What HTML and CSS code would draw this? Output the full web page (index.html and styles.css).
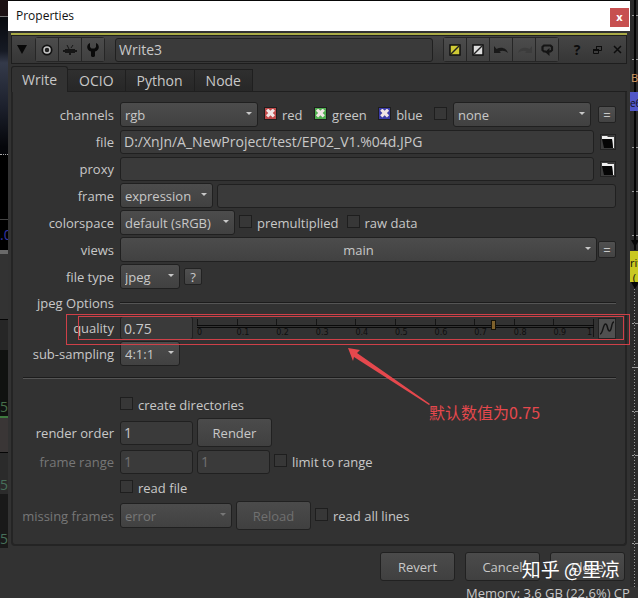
FILE: index.html
```html
<!DOCTYPE html>
<html lang="en">
<head>
    <meta charset="UTF-8">
    <meta name="viewport" content="width=device-width, initial-scale=1.0">
    <title>Properties</title>
    <link rel="stylesheet" href="styles.css">
</head>
<body>
    <div class="desktop">
        <div class="viewer-edge">
            <div class="band band-brown"></div>
            <div class="band band-image"></div>
            <div class="band band-black">.0</div>
            <div class="band band-bar"></div>
            <div class="band band-gray"></div>
            <div class="band band-dark"></div>
            <div class="band band-curve">5</div>
            <div class="band band-panel"></div>
            <div class="band band-low">5</div>
            <div class="band band-last">5</div>
        </div>

        <form class="dialog">
            <header class="titlebar">
                <h1>Properties</h1>
                <button type="button" class="close-btn" aria-label="Close window">x</button>
            </header>

            <div class="node">
                <div class="node-bar">
                    <button type="button" class="bare collapse" aria-label="Collapse">
                        <svg width="10" height="9" viewBox="0 0 10 9"><path d="M0 0h10L5 9z" fill="#080808"/></svg>
                    </button>
                    <div class="tool-group">
                        <button type="button" aria-label="Center node">
                            <svg width="12" height="12" viewBox="0 0 12 12"><circle cx="6" cy="6" r="4.500" fill="#222" stroke="#111" stroke-width="2"/><circle cx="6" cy="6" r="3" fill="none" stroke="#c4c4c4" stroke-width="1.500"/></svg>
                        </button>
                        <button type="button" aria-label="Input controls">
                            <svg width="14" height="12" viewBox="0 0 14 12"><path d="M2 5h10v4H2zM0 6h2v2H0zM12 6h2v2h-2zM6 9h2v2H6z" fill="#161616"/><path d="M4 1l2 4M10 1L8 4" stroke="#161616"/></svg>
                        </button>
                        <button type="button" aria-label="Node settings">
                            <svg width="12" height="14" viewBox="0 0 12 14"><path d="M3 0v4l1.500 1.500h3L9 4V0c2 1 2.800 2.500 2.800 4.200C11.800 6.500 10 8 8 8.500V13L7 14H5l-1-1V8.500C2 8 .2 6.500.2 4.200.2 2.500 1 1 3 0z" fill="#0a0a0a"/></svg>
                        </button>
                    </div>
                    <input type="text" class="node-name" aria-label="Node name" value="Write3">
                    <div class="tool-group">
                        <button type="button" aria-label="Node color">
                            <svg width="12" height="12" viewBox="0 0 12 12"><path d="M1 1h10v10H1z" fill="#d0cb35" stroke="#111" stroke-width="1.500"/><path d="M2 10l8-8" stroke="#222" stroke-width="1.500"/></svg>
                        </button>
                        <button type="button" aria-label="Interface color">
                            <svg width="12" height="12" viewBox="0 0 12 12"><path d="M1 1h10v10H1z" fill="#ddd" stroke="#111" stroke-width="1.500"/><path d="M2 10l8-8" stroke="#222" stroke-width="1.500"/></svg>
                        </button>
                        <button type="button" aria-label="Undo">
                            <svg width="15" height="10" viewBox="0 0 15 10"><path d="M0 1v7h7L5.500 6.500C8 5 11 5.500 14 8 13 3.500 7.500 1 2.500 4z" fill="#191919"/></svg>
                        </button>
                        <button type="button" aria-label="Redo" disabled>
                            <svg width="15" height="10" viewBox="0 0 15 10"><path d="M15 1v7H8l1.500-1.500C7 5 4 5.500 1 8 2 3.500 7.500 1 12.500 4z" fill="#3c3c3c"/></svg>
                        </button>
                        <button type="button" aria-label="Revert knobs">
                            <svg width="13" height="12" viewBox="0 0 13 12"><path d="M5 7.500H3L1.500 6V3L3 1.500h6.500L11 3v3L9.500 7.500H8" fill="none" stroke="#151515" stroke-width="2.200"/><path d="M8.500 4v8L4 8z" fill="#151515"/></svg>
                        </button>
                    </div>
                    <div class="window-tools">
                        <button type="button" class="bare help" aria-label="Help">?</button>
                        <button type="button" class="bare" aria-label="Float">
                            <svg width="9" height="10" viewBox="0 0 9 10"><path d="M3.500 4V1.500h5v4H6" fill="none" stroke="#0c0c0c"/><path d="M3 1h6v1H3z" fill="#0c0c0c"/><path d="M.5 4.500h5v4h-5z" fill="none" stroke="#0c0c0c"/><path d="M0 4h6v2H0z" fill="#0c0c0c"/></svg>
                        </button>
                        <button type="button" class="bare" aria-label="Close panel">
                            <svg width="9" height="9" viewBox="0 0 9 9"><path d="M1 1l7 7M8 1L1 8" stroke="#0c0c0c" stroke-width="1.500"/></svg>
                        </button>
                    </div>
                </div>

                <nav class="tabs">
                    <button type="button" class="tab active">Write</button>
                    <button type="button" class="tab">OCIO</button>
                    <button type="button" class="tab">Python</button>
                    <button type="button" class="tab">Node</button>
                    <span class="tab-fill"></span>
                </nav>

                <div class="panel">
                    <div class="row">
                        <label for="channels">channels</label>
                        <div class="field">
                            <span class="select wide"><select id="channels"><option>rgb</option></select></span>
                            <div class="channel-list">
                                <label class="check"><input type="checkbox" class="red" checked>red</label>
                                <label class="check"><input type="checkbox" class="green" checked>green</label>
                                <label class="check"><input type="checkbox" class="blue" checked>blue</label>
                                <input type="checkbox" aria-label="Extra channel">
                            </div>
                            <span class="select wide"><select aria-label="Extra channel layer"><option>none</option></select></span>
                            <button type="button" class="mini end" aria-label="Channel expression">=</button>
                        </div>
                    </div>
                    <div class="row">
                        <label for="file">file</label>
                        <div class="field spaced">
                            <input type="text" id="file" class="grow" value="D:/XnJn/A_NewProject/test/EP02_V1.%04d.JPG">
                            <button type="button" class="folder" aria-label="Browse file">
                                <svg width="14" height="14" viewBox="0 0 14 14"><path d="M1 1h5l1 1h6v11h-1L11 4H1z" fill="#eee"/><path d="M1 4h10l1 9H3z" fill="#050505"/></svg>
                            </button>
                        </div>
                    </div>
                    <div class="row">
                        <label for="proxy">proxy</label>
                        <div class="field spaced">
                            <input type="text" id="proxy" class="grow">
                            <button type="button" class="folder" aria-label="Browse proxy">
                                <svg width="14" height="14" viewBox="0 0 14 14"><path d="M1 1h5l1 1h6v11h-1L11 4H1z" fill="#eee"/><path d="M1 4h10l1 9H3z" fill="#050505"/></svg>
                            </button>
                        </div>
                    </div>
                    <div class="row">
                        <label for="frame">frame</label>
                        <div class="field">
                            <span class="select frame-mode"><select id="frame"><option>expression</option></select></span>
                            <input type="text" class="grow" aria-label="Frame expression">
                        </div>
                    </div>
                    <div class="row">
                        <label for="colorspace">colorspace</label>
                        <div class="field">
                            <span class="select colorspace"><select id="colorspace"><option>default (sRGB)</option></select></span>
                            <label class="check"><input type="checkbox">premultiplied</label>
                            <label class="check raw"><input type="checkbox">raw data</label>
                        </div>
                    </div>
                    <div class="row">
                        <label for="views">views</label>
                        <div class="field tight">
                            <span class="select grow centered"><select id="views"><option>main</option></select></span>
                            <button type="button" class="mini" aria-label="Split views">=</button>
                        </div>
                    </div>
                    <div class="row">
                        <label for="filetype">file type</label>
                        <div class="field">
                            <span class="select small"><select id="filetype"><option>jpeg</option></select></span>
                            <button type="button" class="mini">?</button>
                        </div>
                    </div>
                    <div class="row short">
                        <span class="row-title">jpeg Options</span>
                        <hr>
                    </div>
                    <div class="row short quality-row">
                        <label for="quality">quality</label>
                        <div class="field">
                            <input type="text" id="quality" class="number" value="0.75">
                            <div class="slider grow">
                                <div class="scale">
                                    <span>0</span><span>0.1</span><span>0.2</span><span>0.3</span><span>0.4</span>
                                    <span>0.5</span><span>0.6</span><span>0.7</span><span>0.8</span><span class="last">0.9<b>1</b></span>
                                </div>
                                <input type="range" min="0" max="1" step="0.01" value="0.75" aria-label="Quality slider">
                            </div>
                            <button type="button" class="curve" aria-label="Animation">
                                <svg width="16" height="16" viewBox="0 0 16 16"><path d="M1 14C4 14 4 4 6.500 4S8 11 10.500 11 12 2 15 2" fill="none" stroke="#151515" stroke-width="1.500"/></svg>
                            </button>
                        </div>
                        <div class="mark mark-outer"></div>
                        <div class="mark mark-inner"></div>
                        <div class="note">
                            <svg width="82" height="58" viewBox="0 0 82 58"><path d="M0 0l12 2-3 3 73 51-1 1L6 9l-1 4z" fill="#e5484d"/></svg>
                            <span lang="zh">默认数值为0.75</span>
                        </div>
                    </div>
                    <div class="row short">
                        <label for="sub">sub-sampling</label>
                        <div class="field">
                            <span class="select small"><select id="sub"><option>4:1:1</option></select></span>
                        </div>
                    </div>
                    <hr class="divider">
                    <div class="row short">
                        <div class="field indent">
                            <label class="check"><input type="checkbox">create directories</label>
                        </div>
                    </div>
                    <div class="row tall">
                        <label for="order">render order</label>
                        <div class="field">
                            <input type="text" id="order" class="number" value="1">
                            <button type="button" class="push">Render</button>
                        </div>
                    </div>
                    <div class="row">
                        <label for="first" class="off">frame range</label>
                        <div class="field">
                            <input type="text" id="first" class="number" value="1" disabled>
                            <input type="text" class="number" aria-label="Last frame" value="1" disabled>
                            <label class="check"><input type="checkbox">limit to range</label>
                        </div>
                    </div>
                    <div class="row short">
                        <div class="field indent">
                            <label class="check"><input type="checkbox">read file</label>
                        </div>
                    </div>
                    <div class="row tall">
                        <label for="missing" class="off">missing frames</label>
                        <div class="field">
                            <span class="select missing off"><select id="missing" disabled><option>error</option></select></span>
                            <button type="button" class="push" disabled>Reload</button>
                            <label class="check"><input type="checkbox">read all lines</label>
                        </div>
                    </div>
                </div>
            </div>

            <footer class="actions">
                <button type="button" class="push">Revert</button>
                <button type="button" class="push">Cancel</button>
                <button type="button" class="push">Close</button>
                <span class="watermark" lang="zh">知乎 @里凉</span>
            </footer>
        </form>

        <div class="graph-edge">
            <span class="wire"></span>
            <span class="graph-label">B</span>
            <span class="graph-node blue-node">e6</span>
            <span class="arrow arrow-a"></span>
            <span class="graph-node yellow-node">rit<br>&nbsp;(</span>
            <span class="arrow arrow-b"></span>
        </div>

        <div class="status">Memory: 3.6 GB (22.6%) CP</div>
    </div>
</body>
</html>
```

FILE: styles.css
```css
* {
    box-sizing: border-box;
}

body {
    margin: 0;
    background: #323232;
    color: #c8c8c8;
    font: 13px/18px "Open Sans", "Noto Sans", "Noto Sans CJK SC", sans-serif;
    overflow: hidden;
}

button,
input,
select {
    margin: 0;
    font: inherit;
    color: inherit;
}

button {
    display: flex;
    align-items: center;
    justify-content: center;
    padding: 0;
}

.desktop {
    display: grid;
    grid-template-columns: 8px minmax(0, 1fr) 8px;
    grid-template-rows: auto 11px;
    min-height: 100vh;
}

/* viewer and curve editor peeking out on the left */
.viewer-edge {
    overflow: hidden;
    font-size: 14px;
}

.band {
    display: flex;
    align-items: flex-end;
    justify-content: flex-start;
}

.band-brown {
    height: 17px;
    background: #1c1214;
    border-bottom: 1px solid #777;
}

.band-image {
    height: 138px;
    background: linear-gradient(#080a0e, #161a24 34px, #343a4a 46px, #1c202c 90px, #05060a 130px);
    border-bottom: 1px dotted #aaa;
}

.band-black {
    height: 95px;
    padding-bottom: 6px;
    background: linear-gradient(#000 64px, #444 64px, #444 65px, #000 65px);
    color: #3434a8;
}

.band-bar {
    height: 4px;
    background: #6a6a6a;
}

.band-gray {
    height: 66px;
    background: #333;
    border-bottom: 1px solid #050505;
}

.band-dark {
    height: 30px;
    background: #262626;
}

.band-curve {
    height: 68px;
    background: #101210;
    border-bottom: 2px solid #3e7a3e;
    color: #47704a;
}

.band-panel {
    height: 35px;
    background: #3a3636;
    border-bottom: 1px solid #050505;
}

.band-low {
    height: 41px;
    background: #2b2b2b;
    color: #47705a;
}

.band-last {
    height: 54px;
    background: #191919;
    color: #47705a;
}

/* dialog window */
.dialog {
    display: flex;
    flex-direction: column;
    border-top: 1px solid #080808;
    background: #323232;
}

.titlebar {
    display: flex;
    align-items: center;
    justify-content: space-between;
    height: 30px;
    padding: 0 1px 0 8px;
    background: #fff;
    color: #111;
}

.titlebar h1 {
    margin: 0;
    font-size: 12px;
    font-weight: normal;
}

.close-btn {
    width: 19px;
    height: 19px;
    margin-top: 3px;
    padding-bottom: 2px;
    border: 0;
    background: #c75050;
    color: #fff;
    font-size: 11px;
    font-weight: bold;
}

.node {
    margin: 2px 3px 0;
    border-top: 2px solid #a9aa46;
}

.node-bar {
    display: flex;
    align-items: center;
    height: 29px;
    border: 1px solid #1e1e1e;
    background: linear-gradient(#454545, #363636);
}

.bare {
    border: 0;
    background: none;
    color: #0c0c0c;
}

.collapse {
    width: 19px;
    margin-right: 4px;
}

.tool-group {
    display: flex;
    border: 1px solid #262626;
    border-radius: 3px;
}

.tool-group button {
    width: 23px;
    height: 23px;
    border: 0;
    border-right: 1px solid #262626;
    background: linear-gradient(#4c4c4c, #404040);
}

.tool-group button:last-child {
    width: 22px;
    border-right: 0;
}

input[type="text"] {
    min-width: 0;
    height: 24px;
    padding: 0 3px;
    border: 1px solid #202020;
    border-radius: 3px;
    background: #3a3a3a;
    font-size: 14px;
    outline: 0;
}

input[type="text"].node-name {
    flex: 1;
    margin: 0 10px;
}

.window-tools {
    display: flex;
    align-items: center;
    gap: 11px;
    padding: 0 4px 0 13px;
}

.help {
    width: 10px;
    font-size: 14px;
    font-weight: bold;
}

/* tabs */
.tabs {
    display: flex;
    align-items: flex-end;
    height: 28px;
    padding-top: 2px;
}

.tab {
    height: 23px;
    padding: 0 11px;
    border: 1px solid #1f1f1f;
    border-left: 0;
    background: linear-gradient(#2f2f2f, #272727);
    font-size: 14px;
}

.tab.active {
    height: 26px;
    padding: 0 10px;
    border-left: 1px solid #1f1f1f;
    border-bottom: 0;
    border-radius: 3px 3px 0 0;
    background: #323232;
}

.tab-fill {
    flex: 1;
    border-bottom: 1px solid #1f1f1f;
}

.panel {
    display: flex;
    flex-direction: column;
    gap: 2px;
    padding: 10px 9px 14px 0;
    border: 2px solid #242424;
    border-top: 0;
    border-radius: 0 0 4px 4px;
}

.row {
    display: grid;
    grid-template-columns: 101px minmax(0, 1fr);
    align-items: center;
    column-gap: 6px;
    height: 25px;
}

.row.short {
    height: 23px;
}

.row.tall {
    height: 29px;
}

.row > label,
.row-title {
    text-align: right;
    white-space: nowrap;
}

.row > .off,
.off {
    color: #777;
}

.field {
    display: flex;
    align-items: center;
    gap: 4px;
}

.field.tight {
    gap: 1px;
}

.field.spaced {
    gap: 6px;
}

.indent {
    grid-column: 2;
}

.grow {
    flex: 1;
}

.number {
    width: 73px;
}

input:disabled,
button:disabled {
    color: #707070;
}

/* drop-downs: the arrow shares the select's grid cell */
.select {
    display: inline-grid;
    align-items: center;
}

.select select,
.select::after {
    grid-area: 1 / 1;
}

.select select {
    width: 100%;
    height: 25px;
    padding: 0 4px;
    border: 1px solid #202020;
    border-radius: 3px;
    background: linear-gradient(#4c4c4c, #414141);
    appearance: none;
    opacity: 1;
}

.select::after {
    content: "";
    justify-self: end;
    margin: 0 6px 3px 0;
    border: 3px solid transparent;
    border-top-color: currentColor;
    border-bottom: 0;
    pointer-events: none;
}

.wide {
    width: 138px;
}

.frame-mode {
    width: 93px;
}

.colorspace {
    width: 115px;
}

.small {
    width: 60px;
}

.missing {
    width: 112px;
}

.centered select {
    text-align: center;
    text-align-last: center;
}

/* check boxes */
.check {
    display: flex;
    align-items: center;
    gap: 5px;
    white-space: nowrap;
}

.channel-list {
    display: flex;
    flex: 1;
    align-items: center;
    justify-content: space-between;
    padding: 0 2px;
}

.raw {
    margin-left: 4px;
}

input[type="checkbox"] {
    display: grid;
    place-items: center;
    width: 13px;
    height: 13px;
    margin-bottom: 3px;
    border: 1px solid #1e1e1e;
    background: #373737;
    appearance: none;
}

input[type="checkbox"]:checked::before {
    content: "";
    width: 9px;
    height: 9px;
    background: #f0e4e4;
    clip-path: polygon(25% 0, 50% 25%, 75% 0, 100% 25%, 75% 50%, 100% 75%, 75% 100%, 50% 75%, 25% 100%, 0 75%, 25% 50%, 0 25%);
}

input.red:checked {
    background: #c04a4a;
}

input.green:checked {
    background: #4fae4f;
}

input.blue:checked {
    background: #3c3ca8;
}

.mini {
    width: 18px;
    height: 17px;
    border: 1px solid #222;
    border-radius: 2px;
    background: linear-gradient(#505050, #434343);
}

.mini.end {
    margin-left: 3px;
}

.folder,
.curve {
    width: 16px;
    height: 16px;
    border: 1px solid #222;
    background: #3c3c3c;
}

.curve {
    width: 18px;
    height: 21px;
    background: #505050;
}

.push {
    width: 75px;
    height: 29px;
    border: 1px solid #212121;
    border-radius: 3px;
    background: linear-gradient(#4b4b4b, #404040);
}

hr {
    width: 100%;
    height: 2px;
    margin: 0;
    border: 0;
    border-top: 1px solid #1c1c1c;
    background: #555;
}

.divider {
    width: auto;
    margin: 11px 0 12px 10px;
}

/* quality slider */
.slider {
    display: grid;
    align-items: center;
    height: 22px;
}

.scale,
.slider input {
    grid-area: 1 / 1;
}

.scale {
    display: grid;
    grid-template-columns: repeat(10, 1fr);
    height: 18px;
    border-right: 1px solid #151515;
    color: #0e0e0e;
    font: 8px/9px "DejaVu Sans", sans-serif;
}

.scale span {
    display: flex;
    align-items: flex-end;
    background: linear-gradient(#151515, #151515) 0 0 / 1px 6px no-repeat;
}

.scale .last {
    justify-content: space-between;
    padding-right: 1px;
}

.scale b {
    font-weight: normal;
}

.slider input {
    width: 100%;
    height: 10px;
    margin-bottom: 6px;
    border-radius: 0;
    background: linear-gradient(#0a0a0a, #0a0a0a) 0 5px / 100% 1px no-repeat, linear-gradient(#0a0a0a, #0a0a0a) 0 7px / 100% 1px no-repeat;
    appearance: none;
}

.slider input::-webkit-slider-thumb {
    width: 5px;
    height: 10px;
    border: 1px solid #17130a;
    background: #80622c;
    appearance: none;
}

/* red marks drawn over the quality row */
.quality-row {
    position: relative;
}

.mark {
    position: absolute;
    border: 1px solid #cf4048;
    pointer-events: none;
}

.mark-outer {
    inset: -2px -14px -6px 53px;
}

.mark-inner {
    inset: 0 -8px -1px 65px;
}

.note {
    position: absolute;
    top: 32px;
    left: 335px;
    display: flex;
    align-items: flex-end;
    color: #e5484d;
    font-size: 16px;
    line-height: 20px;
    white-space: nowrap;
    pointer-events: none;
}

.note span {
    margin: 0 0 -16px -1px;
    font-family: "Noto Sans CJK SC", sans-serif;
}

/* dialog buttons */
.actions {
    position: relative;
    display: flex;
    justify-content: flex-end;
    gap: 10px;
    padding: 6px 5px 4px;
}

.watermark {
    position: absolute;
    right: 10px;
    bottom: 4px;
    color: #fff;
    font: 19px/24px "Noto Sans CJK SC", sans-serif;
    pointer-events: none;
}

/* node graph peeking out on the right */
.graph-edge {
    position: relative;
    overflow: hidden;
    background:
        repeating-linear-gradient(#999 0 1px, #2b2b2b 1px 3px) 4px 289px / 1px 300px no-repeat,
        repeating-linear-gradient(transparent 0 15px, #999 15px 16px, transparent 16px 44px) 2px 0 / 6px 100% no-repeat #2b2b2b;
    font-size: 11px;
}

.wire {
    position: absolute;
    top: 0;
    left: 4px;
    width: 2px;
    height: 250px;
    background: #050505;
}

.graph-label {
    position: absolute;
    top: 69px;
    left: 1px;
    color: #d69a60;
}

.graph-node {
    position: absolute;
    left: 0;
    width: 8px;
    overflow: hidden;
    color: #111;
    line-height: 15px;
}

.blue-node {
    top: 92px;
    height: 19px;
    padding-top: 4px;
    background: #5157c8;
    font-size: 10px;
}

.yellow-node {
    top: 251px;
    height: 31px;
    padding-top: 4px;
    background: #c9c821;
}

.arrow {
    position: absolute;
    left: 1px;
    border: 4px solid transparent;
    border-top: 7px solid #050505;
    border-bottom: 0;
}

.arrow-a {
    top: 240px;
}

.arrow-b {
    top: 282px;
}

.status {
    display: flex;
    grid-column: 1 / -1;
    align-items: center;
    height: 11px;
    padding-left: calc(100% - 172px);
    overflow: hidden;
    white-space: nowrap;
}
```
